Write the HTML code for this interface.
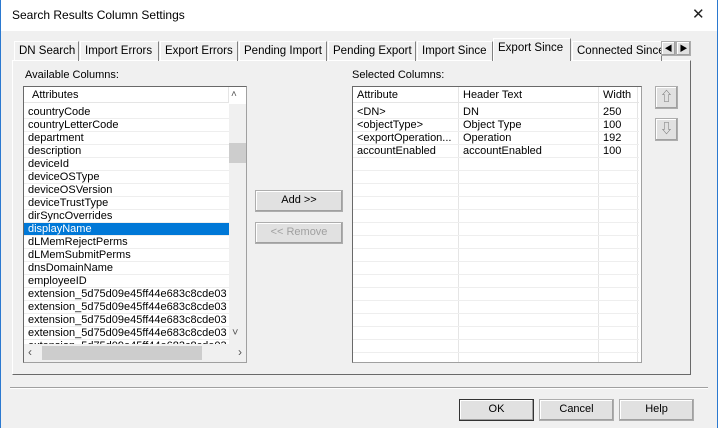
<!DOCTYPE html><html><head><style>
*{box-sizing:border-box;margin:0;padding:0}
body{width:718px;height:428px;background:#f0f0f0;position:relative;overflow:hidden;font-family:"Liberation Sans","Noto Sans CJK JP",sans-serif;font-size:11px;color:#000}
.a{position:absolute}
.title{left:0;top:0;width:718px;height:31px;background:#fff}
.btn{position:absolute;background:#e1e1e1;border:1px solid #adadad;text-align:center;box-shadow:inset -1px -1px 0 #a0a0a0,inset 1px 1px 0 #fff}
.tab{position:absolute;top:41px;height:20px;border:1px solid #fff;border-right:1px solid #808080;border-bottom:none;padding:3px 0 0 4px;white-space:nowrap;overflow:hidden;font-size:11.5px}
.row{position:absolute;height:13px;line-height:13px;white-space:nowrap;overflow:hidden}
.lst{background:#fff;border:1px solid #a0a0a0;border-top-color:#696969;border-left-color:#696969}
</style></head><body>
<div class="a title"></div>
<div class="a" style="left:0;top:0;width:1px;height:428px;background:#2b79d0"></div>
<div class="a" style="left:717px;top:0;width:1px;height:428px;background:#2b79d0"></div>
<div class="a" style="left:12px;top:8px;font-size:12px">Search Results Column Settings</div>
<div class="a" style="left:692px;top:5px;font-size:15px;color:#222">✕</div>
<div class="a" style="left:12px;top:60px;width:679px;height:315px;border-top:1px solid #fff;border-left:1px solid #fff;border-right:1px solid #696969;border-bottom:1px solid #696969"></div>
<div class="tab" style="left:14px;width:65px">DN Search</div>
<div class="tab" style="left:80px;width:79px">Import Errors</div>
<div class="tab" style="left:160px;width:78px">Export Errors</div>
<div class="tab" style="left:239px;width:88px">Pending Import</div>
<div class="tab" style="left:328px;width:88px">Pending Export</div>
<div class="tab" style="left:417px;width:76px">Import Since</div>
<div class="tab" style="left:493px;top:38px;height:23px;width:78px;background:#f0f0f0;padding-top:3px">Export Since</div>
<div class="tab" style="left:572px;width:90px">Connected Since</div>
<div class="btn" style="left:661px;top:41px;width:15px;height:15px;font-size:8px;line-height:13px">◀</div>
<div class="btn" style="left:676px;top:41px;width:15px;height:15px;font-size:8px;line-height:13px">▶</div>
<div class="a" style="left:25px;top:69px">Available Columns:</div>
<div class="a" style="left:352px;top:69px">Selected Columns:</div>
<div class="a lst" style="left:23px;top:86px;width:224px;height:277px;overflow:hidden">
<div class="row" style="left:0;top:0;width:205px;height:16px;line-height:16px;padding-left:8px;border-bottom:1px solid #e5e5e5;border-right:1px solid #e5e5e5">Attributes</div>
<div class="a" style="left:207px;top:2px;font-size:10px;color:#555">˄</div>
<div id="L"></div>
<div class="a" style="left:205px;top:17px;width:17px;height:240px;background:#f0f0f0"></div>
<div class="a" style="left:205px;top:56px;width:17px;height:20px;background:#cdcdcd"></div>
<div class="a" style="left:208px;top:240px;font-size:11px;color:#555">˅</div>
<div class="a" style="left:0;top:257px;width:222px;height:18px;background:#f0f0f0"></div>
<div class="a" style="left:18px;top:259px;width:160px;height:14px;background:#cdcdcd"></div>
<div class="a" style="left:4px;top:258px;font-size:12px;color:#555">‹</div>
<div class="a" style="left:214px;top:258px;font-size:12px;color:#555">›</div>
</div>
<div class="btn" style="left:255px;top:190px;width:88px;height:22px;line-height:19px">Add &gt;&gt;</div>
<div class="btn" style="left:255px;top:222px;width:88px;height:22px;line-height:19px;color:#a0a0a0">&lt;&lt; Remove</div>
<div class="a lst" style="left:352px;top:86px;width:290px;height:277px;overflow:hidden">
<div class="a" style="left:0;top:0;width:286px;height:16px;border-bottom:1px solid #e5e5e5"></div>
<div class="a" style="left:105px;top:0;width:1px;height:275px;background:#e5e5e5"></div>
<div class="a" style="left:245px;top:0;width:1px;height:275px;background:#e5e5e5"></div>
<div class="a" style="left:284px;top:0;width:1px;height:275px;background:#e5e5e5"></div>
<div class="row" style="left:4px;top:2px">Attribute</div>
<div class="row" style="left:110px;top:2px">Header Text</div>
<div class="row" style="left:250px;top:2px">Width</div>
<div id="R"></div>
</div>
<div class="btn" style="left:655px;top:86px;width:23px;height:23px;line-height:20px;color:#777;font-size:13px">⇧</div>
<div class="btn" style="left:655px;top:118px;width:23px;height:23px;line-height:20px;color:#777;font-size:13px">⇩</div>
<div class="a" style="left:10px;top:387px;width:698px;height:1px;background:#a0a0a0"></div>
<div class="a" style="left:10px;top:388px;width:698px;height:1px;background:#fff"></div>
<div class="btn" style="left:459px;top:399px;width:75px;height:22px;line-height:19px;border:1px solid #333">OK</div>
<div class="btn" style="left:539px;top:399px;width:75px;height:22px;line-height:19px">Cancel</div>
<div class="btn" style="left:619px;top:399px;width:75px;height:22px;line-height:19px">Help</div>
<script>
var l=["countryCode","countryLetterCode","department","description","deviceId","deviceOSType","deviceOSVersion","deviceTrustType","dirSyncOverrides","displayName","dLMemRejectPerms","dLMemSubmitPerms","dnsDomainName","employeeID","extension_5d75d09e45ff44e683c8cde03","extension_5d75d09e45ff44e683c8cde03","extension_5d75d09e45ff44e683c8cde03","extension_5d75d09e45ff44e683c8cde03","extension_5d75d09e45ff44e683c8cde03"],h="";
l.forEach(function(t,i){var s=i==9;h+='<div class="row" style="left:0;top:'+(19+i*13)+'px;width:205px;padding-left:4px;border-bottom:1px solid #eee;'+(s?'background:#0078d7;color:#fff;':'')+'">'+t+'</div>';});
document.getElementById("L").innerHTML=h;
var r=[["&lt;DN&gt;","DN","250"],["&lt;objectType&gt;","Object Type","100"],["&lt;exportOperation...","Operation","192"],["accountEnabled","accountEnabled","100"]];h="";
for(var i=0;i<20;i++){var t=r[i]||["","",""],y=19+i*13;h+='<div class="a" style="left:0;top:'+(y+12)+'px;width:286px;height:1px;background:#eee"></div><div class="row" style="left:4px;top:'+y+'px">'+t[0]+'</div><div class="row" style="left:110px;top:'+y+'px">'+t[1]+'</div><div class="row" style="left:250px;top:'+y+'px">'+t[2]+'</div>';}
document.getElementById("R").innerHTML=h;
</script>
</body></html>
